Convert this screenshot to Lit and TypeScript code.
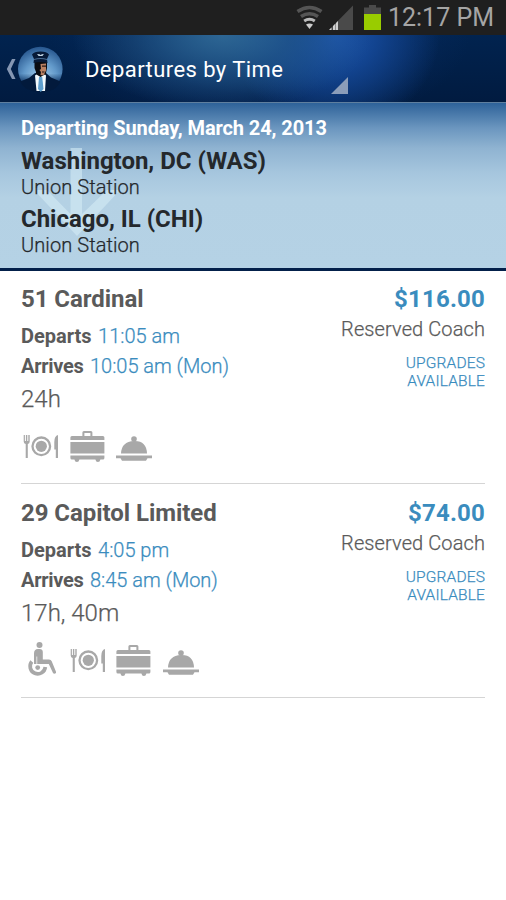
import { LitElement, html, css, svg } from "lit";
import { customElement, property } from "lit/decorators.js";

type Amenity = "wheelchair" | "dining" | "baggage" | "service";
interface Train { name: string; departs: string; arrives: string; duration: string; price: string; amenities: Amenity[]; }

const trains: Train[] = [
  { name: "51 Cardinal", departs: "11:05 am", arrives: "10:05 am (Mon)", duration: "24h", price: "$116.00", amenities: ["dining", "baggage", "service"] },
  { name: "29 Capitol Limited", departs: "4:05 pm", arrives: "8:45 am (Mon)", duration: "17h, 40m", price: "$74.00", amenities: ["wheelchair", "dining", "baggage", "service"] },
];

const glyphs = {
  wheelchair: svg`<circle cx="16.500" cy="0" r="3"/>
    <path d="M11 8.500Q11 4 15 4h1.500q3.300 0 3.300 3v7.500H26q2 0 2.700 1.800L33 26.700q.5 1.400-.9 1.900-1.500.5-2.200-.9L25.800 19H14.200v-7.500h-.7V19H11z"/>
    <path d="M8.800 16.500A7.600 7.600 0 1 0 22.300 22" fill="none" stroke="#a8a8a8" stroke-width="3.700"/><circle cx="14.700" cy="22.600" r="2.400"/>`,
  dining: svg`<path d="M0 4h1.200v6h1V4h1.400v6h1V4H6v6.500Q6 12.600 4.100 13v14H2V13Q0 12.600 0 10.500z" transform="translate(.7 0)"/>
    <circle cx="18.300" cy="15.300" r="8.800" fill="none" stroke="#a8a8a8" stroke-width="2.300"/><circle cx="18.300" cy="15.300" r="5.600"/>
    <path d="M35 4v23h-2.200v-8.500h-1.500V11q0-6 3.700-7z"/>`,
  baggage: svg`<g transform="translate(.4 0)"><path d="M12 5V1.500Q12 0 13.500 0h7Q22 0 22 1.500V5h-2V2h-6v3z"/>
    <path d="M0 9V6.500Q0 5 1.500 5h31Q34 5 34 6.500V9zM0 11h34v11.500H0zM0 24.500h34V27q0 1.500-1.500 1.500H30q-.5 2.500-2.500 2.500T25 28.500H9Q8.500 31 6.500 31T4 28.500H1.500Q0 28.500 0 27z"/></g>`,
  service: svg`<circle cx="18" cy="8" r="2.800"/><path d="M5 22.500Q5.500 10.500 18 10t13 12.500zM0 24.500h36v2.700h-4.500l-1.500 2.600H6l-1.500-2.600H0z"/>`,
};

@customElement("status-bar")
export class StatusBar extends LitElement {
  static styles = css`
    :host { display: flex; height: 35px; background: #1f1f1f; justify-content: flex-end; box-sizing: border-box; padding-right: 12px; }
    svg { width: 90px; height: 35px; margin-right: 2px; flex: none; }
    .clock { font-size: 25px; line-height: 36px; color: #a5a5a5; white-space: nowrap; }
  `;
  render() {
    return html`<svg viewBox="296 0 90 35">
      <g fill="none" stroke="#555" stroke-width="3.600"><path d="M297.500 11.500Q309.500 3.500 321.500 11.500"/><path d="M301 16.500Q309.500 11 318 16.500"/></g>
      <path d="M304.200 21Q309.500 17.500 314.800 21" fill="none" stroke="#bbb" stroke-width="3"/><path d="M306 24.500q3.500-2 7 0L309.500 29z" fill="#ccc"/>
      <path d="M353 5.500V30H329z" fill="#4a4a4a"/><path d="M329 30l2.500-2.500V30zM333 26l2.500-2.500V30H333zM337 22l1-1v9h-2v-7z" fill="#d0d0d0"/>
      <path d="M364 7.500h5V5h7v2.500h5V14h-17z" fill="#4a4a4a"/><path d="M364 14h17v16h-17z" fill="#99cc00"/>
    </svg><span class="clock">12:17 PM</span>`;
  }
}

@customElement("title-bar")
export class TitleBar extends LitElement {
  static styles = css`
    :host { display: flex; height: 68px; box-sizing: border-box; border-bottom: 1px solid #5f7f9f; padding-left: 6px;
      background:
        radial-gradient(ellipse 150px 75px at 222px 0, rgba(48,106,150,.9) 0, rgba(35,88,136,.65) 45%, rgba(10,50,100,0) 100%),
        radial-gradient(ellipse 105px 95px at 335px 0, #1d55ae 0, rgba(20,72,152,.85) 40%, rgba(5,35,90,0) 100%),
        radial-gradient(ellipse 210px 100px at 260px 0, #174b8c 0, rgba(9,45,100,.5) 60%, rgba(1,29,67,0) 100%),
        linear-gradient(#01234f, #011b40); }
    .back { width: 60px; height: 67px; flex: none; }
    .title { font-size: 22px; letter-spacing: .43px; line-height: 70px; color: #fff; margin-left: 19px; width: 246px; flex: none; white-space: nowrap; }
    .corner { width: 17px; height: 17px; margin-top: 42px; background: #8b9db9; clip-path: polygon(100% 0, 100% 100%, 0 100%); }
  `;
  render() {
    return html`<svg class="back" viewBox="6 35 60 67">
      <defs><radialGradient id="disc" cx=".5" cy=".7" r=".75"><stop offset="0" stop-color="#a5cdea"/><stop offset=".5" stop-color="#6299ca"/><stop offset="1" stop-color="#1d4b84"/></radialGradient>
      <linearGradient id="fade" x2="0" y2="1"><stop offset=".6" stop-color="#012250" stop-opacity="0"/><stop offset=".85" stop-color="#012250"/></linearGradient></defs>
      <path d="M12 59h3.500L10.800 69l4.700 10H12L6.800 69z" fill="#8496b2"/>
      <circle cx="40.300" cy="69" r="22.300" fill="url(#disc)"/><circle cx="40.300" cy="69" r="22.500" fill="url(#fade)"/>
      <path d="M20 81.500l9-3.500 6-5h11l5 4.500 9.500 4Q56 92 40.300 92 25 92 20 81.500z" fill="#021a3c"/>
      <path d="M34.500 60h12.500v8l-1 5v4H36v-5l-1.500-4z" fill="#0a0c12"/><path d="M40.500 64l5.500-.5v7l-2.500 5-3-.5.500-3-1.500-2 1.500-1z" fill="#b98162"/><path d="M42 65.500h4v1.200h-4zM42 71.500h2.500v1H42z" fill="#2a1a18"/>
      <path d="M35 75.500l1.500-1 4 2.500 4.500-2.500 1 1-1 15.500h-8.500z" fill="#f3fafd"/><path d="M39 77h3.200l1.300 12-2.700 3-2.800-3z" fill="#5e9fce"/>
      <path d="M32 54.500Q34 51.500 40.500 51.500T49 54.500l-2 4.500.5 4q-7-2-14 0L34 59z" fill="#071a37"/><path d="M34 59q6.500-2 13 0v1q-6.500-1.800-13 0z" fill="#4b6e94"/><path d="M37 54l2.500.3 1.200.7 1.200-.7 2-.3-1.500 2h-3.800z" fill="#c5d9e8"/>
    </svg><span class="title">Departures by Time</span><span class="corner"></span>`;
  }
}

@customElement("route-summary")
export class RouteSummary extends LitElement {
  static styles = css`
    :host { display: block; position: relative; height: 168px; box-sizing: border-box; padding: 13px 21px 0; border-bottom: 3px solid #03204a;
      background: linear-gradient(#2e6299 0, #6b96bf 25px, #8fb3d1 45px, #a6c6de 70px, #b4d1e4 95px, #b5d2e5 100%); color: #24282c; white-space: nowrap; }
    .arrow { position: absolute; left: 36px; top: 45px; width: 82px; height: 92px; }
    .lines { position: relative; }
    .date { font-size: 20px; font-weight: 700; letter-spacing: -.1px; line-height: 24px; color: #fff; margin-bottom: 5px; }
    .city { font-size: 24px; font-weight: 700; line-height: 33px; letter-spacing: -.02px; }
    .station { font-size: 20px; font-weight: 300; -webkit-text-stroke: .25px currentColor; letter-spacing: .08px; line-height: 19px; margin-bottom: 6px; }
  `;
  render() {
    return html`<svg class="arrow" viewBox="36 148 82 92"><path d="M70.500 148h11.500v66l25-24h13L77 236 34 190h13l23.500 24z" fill="#d3ebf5" fill-opacity=".6"/></svg>
      <div class="lines"><div class="date">Departing Sunday, March 24, 2013</div>
      <div class="city">Washington, DC (WAS)</div><div class="station">Union Station</div>
      <div class="city">Chicago, IL (CHI)</div><div class="station">Union Station</div></div>`;
  }
}

@customElement("train-row")
export class TrainRow extends LitElement {
  @property({ attribute: false }) train!: Train;
  static styles = css`
    :host { display: flex; justify-content: space-between; height: 214px; box-sizing: border-box; border-bottom: 1px solid #d5d5d5; padding-top: 13px; color: #5a5a5a; white-space: nowrap; }
    .name, .price { font-size: 24px; font-weight: 700; line-height: 32px; }
    .name { letter-spacing: -.05px; }
    .time { font-size: 20px; line-height: 30px; color: #3a8cbe; }
    .value, .duration, .coach, .upgrade { font-weight: 300; -webkit-text-stroke: .25px currentColor; }
    .value { letter-spacing: -.02px; }
    .label { font-weight: 700; color: #5a5a5a; margin-right: 6.500px; }
    .label.arrives { letter-spacing: -.28px; }
    .times { margin-top: 6px; }
    .duration { font-size: 24px; line-height: 36px; }
    .icons { display: flex; gap: 11.500px; margin: 14px 0 0 2px; }
    .icons svg { display: block; height: 35px; width: 35px; overflow: visible; fill: #a8a8a8; }
    .fare { text-align: right; }
    .price { color: #3a8cbe; letter-spacing: .2px; }
    .coach { font-size: 20px; letter-spacing: .1px; line-height: 28px; }
    .upgrade { font-size: 15.500px; letter-spacing: .15px; line-height: 17.500px; color: #3a8cbe; margin-top: 12px; }
  `;
  render() {
    const t = this.train;
    return html`<div><div class="name">${t.name}</div>
      <div class="times"><div class="time"><span class="label">Departs</span><span class="value">${t.departs}</span></div>
      <div class="time"><span class="label arrives">Arrives</span><span class="value">${t.arrives}</span></div></div>
      <div class="duration">${t.duration}</div>
      <div class="icons">${t.amenities.map((a) => html`<svg viewBox="0 0 35 35">${glyphs[a]}</svg>`)}</div></div>
      <div class="fare"><div class="price">${t.price}</div><div class="coach">Reserved Coach</div><div class="upgrade">UPGRADES<br>AVAILABLE</div></div>`;
  }
}

@customElement("app-root")
export class AppRoot extends LitElement {
  static styles = css`
    :host { display: block; height: 900px; overflow: hidden; background: #fff; font-family: Roboto, "Liberation Sans", sans-serif; }
    .list { padding: 0 21px; margin-top: -1px; }
  `;
  render() {
    return html`<status-bar></status-bar><title-bar></title-bar><route-summary></route-summary>
      <div class="list">${trains.map((t) => html`<train-row .train=${t}></train-row>`)}</div>`;
  }
}
